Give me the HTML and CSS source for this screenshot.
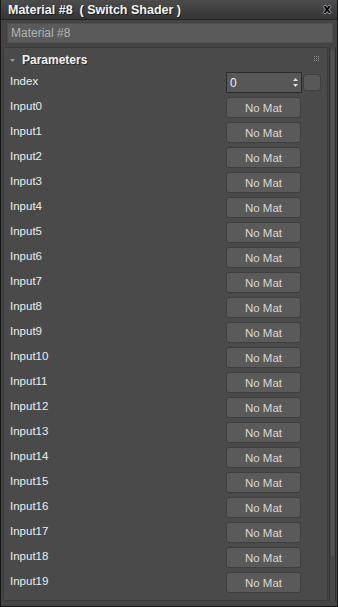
FILE: index.html
```html
<!DOCTYPE html>
<html lang="en">
<head>
    <meta charset="UTF-8">
    <title>Material #8 ( Switch Shader )</title>
    <link rel="stylesheet" href="styles.css">
</head>
<body>
    <div class="window">
        <div class="title-bar">
            <span class="title">Material #8&nbsp;&nbsp;( Switch Shader )</span>
            <span class="close">x</span>
        </div>
        <div class="name-field">Material #8</div>

        <div class="body">
            <div class="rollout">
                <div class="rollout-head">
                    <svg class="arrow" width="5" height="3" viewBox="0 0 5 3"><path d="M0 0H5L2.5 3Z" fill="#9a9a9a"/></svg>
                    <span class="rollout-title">Parameters</span>
                    <svg class="grip" width="5" height="5" viewBox="0 0 5 5" fill="#8a8a8a">
                        <rect x="0" y="0" width="1" height="1"/><rect x="2" y="0" width="1" height="1"/><rect x="4" y="0" width="1" height="1"/>
                        <rect x="0" y="2" width="1" height="1"/><rect x="2" y="2" width="1" height="1"/><rect x="4" y="2" width="1" height="1"/>
                        <rect x="0" y="4" width="1" height="1"/><rect x="2" y="4" width="1" height="1"/><rect x="4" y="4" width="1" height="1"/>
                    </svg>
                </div>

                <div class="rows" id="rows">
                    <div class="row">
                        <span class="label">Index</span>
                        <div class="spinner">
                            <span>0</span>
                            <svg width="5" height="9" viewBox="0 0 5 9" fill="#e0e0e0"><path d="M2.5 0L5 3H0Z"/><path d="M0 6H5L2.5 9Z"/></svg>
                        </div>
                        <div class="swatch"></div>
                    </div>
                </div>
            </div>
            <div class="scrollbar"><div class="thumb"></div></div>
        </div>
    </div>

    <script>
        const rows = document.getElementById('rows');

        // one material slot per input
        for (let i = 0; i < 20; i++) {
            const row = document.createElement('div');
            row.className = 'row';
            row.innerHTML = `<span class="label">Input${i}</span><button class="slot">No Mat</button>`;
            rows.appendChild(row);
        }
    </script>
</body>
</html>
```

FILE: styles.css
```css
/* General styles */
body {
    margin: 0;
    padding: 0;
    background-color: #444444;
    font-family: "Liberation Sans", Arial, sans-serif;
    overflow: hidden;
}

/* Window frame */
.window {
    box-sizing: border-box;
    width: 338px;
    height: 607px;
    background: #444444;
    border: 1px solid #161616;
    border-top: none;
    display: flex;
    flex-direction: column;
}

.title-bar {
    height: 19px;
    display: flex;
    align-items: center;
    justify-content: space-between;
    padding: 0 6px 0 7px;
    background: linear-gradient(#4c4c4c, #353535);
    border-bottom: 1px solid #232323;
}

.title {
    color: #f2f2f2;
    font-size: 12.5px;
    font-weight: bold;
    text-shadow: 1px 1px 0 #1c1c1c;
    white-space: nowrap;
}

.close {
    color: #000000;
    font-family: "DejaVu Sans", sans-serif;
    font-size: 12px;
    font-weight: bold;
    line-height: 1;
    margin-top: -1px;
    text-shadow: 1px 0 0 #9a9a9a, -1px 0 0 #9a9a9a, 0 1px 0 #9a9a9a, 0 -1px 0 #9a9a9a;
}

.name-field {
    box-sizing: border-box;
    height: 20px;
    margin: 3px 4px 0 6px;
    padding: 0 3px;
    background: #5a5a5a;
    border: 1px solid #4f4f4f;
    color: #b2b2b2;
    font-size: 12px;
    line-height: 18px;
}

/* Rollout + scrollbar */
.body {
    flex: 1;
    display: flex;
    margin: 4px 0 5px 2px;
}

.rollout {
    box-sizing: border-box;
    width: 325px;
    background: #4a4a4a;
    border: 1px solid #3a3a3a;
    border-radius: 3px;
}

.rollout-head {
    box-sizing: border-box;
    height: 21px;
    display: flex;
    align-items: center;
    padding: 3px 8px 0 6px;
}

.arrow {
    margin-right: 7px;
}

.rollout-title {
    flex: 1;
    color: #f0f0f0;
    font-size: 12px;
    font-weight: bold;
    text-shadow: 1px 1px 0 #2a2a2a;
}

.grip {
    margin-top: -4px;
}

.rows {
    display: flex;
    flex-direction: column;
    gap: 4px;
    padding: 3px 6px 0 6px;
}

.row {
    height: 21px;
    display: flex;
    align-items: center;
}

.label {
    flex: 1;
    color: #ececec;
    font-size: 11.5px;
    margin-top: -3px;
}

.spinner {
    box-sizing: border-box;
    width: 76px;
    height: 21px;
    display: flex;
    align-items: center;
    justify-content: space-between;
    padding: 0 3px 0 3px;
    background: #575757;
    border: 1px solid #2c2c2c;
    color: #f0f0f0;
    font-size: 12px;
}

.swatch {
    box-sizing: border-box;
    width: 18px;
    height: 17px;
    margin-left: 1px;
    background: #585858;
    border: 1px solid #3e3e3e;
    border-radius: 3px;
}

.slot {
    box-sizing: border-box;
    width: 75px;
    height: 21px;
    margin-right: 20px;
    padding: 0;
    background: #5a5a5a;
    border: 1px solid #3f3f3f;
    border-radius: 3px;
    color: #d8d8d8;
    font-family: "Liberation Sans", Arial, sans-serif;
    font-size: 11.5px;
}

.scrollbar {
    box-sizing: border-box;
    width: 7px;
    margin-left: 1px;
    background: #484848;
    border-left: 1px solid #343434;
    border-right: 1px solid #303030;
    padding-top: 3px;
}

.thumb {
    height: 506px;
    margin: 0 1px;
    background: #525252;
}
```
